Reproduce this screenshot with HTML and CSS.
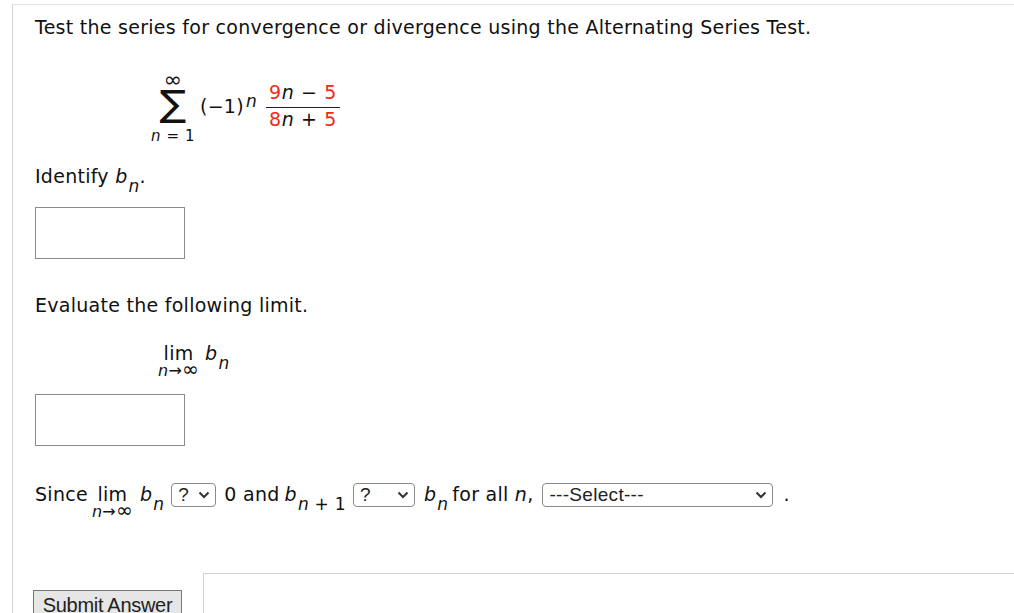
FILE: index.html
```html
<!DOCTYPE html>
<html lang="en">
<head>
    <meta charset="UTF-8">
    <title>Alternating Series Test</title>
    <link rel="stylesheet" href="styles.css">
</head>
<body>
    <div class="frame">
        <div class="question">
            <p class="prompt">Test the series for convergence or divergence using the Alternating Series Test.</p>

            <div class="series">
                <span class="sigma">
                    <span class="sigma-top">&infin;</span>
                    <span class="sigma-sign">&sum;</span>
                    <span class="sigma-bottom"><i>n</i> = 1</span>
                </span>
                <span class="sign">(&minus;1)<sup><i>n</i></sup></span>
                <span class="fraction">
                    <span class="num"><span class="red">9</span><i>n</i> &minus; <span class="red">5</span></span>
                    <span class="den"><span class="red">8</span><i>n</i> + <span class="red">5</span></span>
                </span>
            </div>

            <p class="step step-first">Identify <i>b</i><sub><i>n</i></sub>.</p>
            <input type="text" class="answer">

            <p class="step step-limit">Evaluate the following limit.</p>
            <div class="limit-block">
                <span class="lim">
                    <span class="lim-word">lim</span>
                    <span class="lim-under"><i>n</i>&rarr;<span class="inf">&infin;</span></span>
                </span>
                <span class="var"><i>b</i><sub><i>n</i></sub></span>
            </div>
            <input type="text" class="answer answer-limit">

            <div class="since">
                <span>Since</span>
                <span class="lim">
                    <span class="lim-word">lim</span>
                    <span class="lim-under"><i>n</i>&rarr;<span class="inf">&infin;</span></span>
                </span>
                <span class="var"><i>b</i><sub><i>n</i></sub></span>
                <span class="pick-wrap pick-small">
                    <select class="pick">
                        <option>?</option>
                        <option>=</option>
                        <option>&gt;</option>
                        <option>&lt;</option>
                    </select>
                    <svg class="chevron" width="12" height="8" viewBox="0 0 12 8"><path d="M1.5 1.5 L6 6 L10.5 1.5" fill="none" stroke="#333" stroke-width="2"/></svg>
                </span>
                <span class="word-and">0 and</span>
                <span class="var var-next"><i>b</i><sub><i>n</i> + 1</sub></span>
                <span class="pick-wrap pick-mid">
                    <select class="pick">
                        <option>?</option>
                        <option>&le;</option>
                        <option>&ge;</option>
                    </select>
                    <svg class="chevron" width="12" height="8" viewBox="0 0 12 8"><path d="M1.5 1.5 L6 6 L10.5 1.5" fill="none" stroke="#333" stroke-width="2"/></svg>
                </span>
                <span class="var var-after"><i>b</i><sub><i>n</i></sub></span>
                <span class="word-all">for all <i>n</i>,</span>
                <span class="pick-wrap pick-wide">
                    <select class="pick">
                        <option>---Select---</option>
                        <option>the series is convergent</option>
                        <option>the series is divergent</option>
                    </select>
                    <svg class="chevron" width="12" height="8" viewBox="0 0 12 8"><path d="M1.5 1.5 L6 6 L10.5 1.5" fill="none" stroke="#333" stroke-width="2"/></svg>
                </span>
                <span class="dot">.</span>
            </div>
        </div>

        <div class="footer">
            <button class="submit">Submit Answer</button>
            <div class="notes"></div>
        </div>
    </div>
</body>
</html>
```

FILE: styles.css
```css
body {
    margin: 0;
    padding: 0;
    background: white;
    font-family: "DejaVu Sans", Verdana, sans-serif;
    color: #111;
}
.frame {
    margin: 4px 0 0 12px;
    border-left: 1px solid #d6d6d6;
    border-top: 1px solid #e4e4e4;
    min-height: 640px;
}
.question {
    padding: 9px 0 0 22px;
    font-size: 19px;
    letter-spacing: 0.27px;
}
.prompt {
    margin: 0;
    line-height: 26px;
}
.red {
    color: #ee2a1b;
}
i {
    font-style: italic;
}
sub, sup {
    font-size: 17px;
    line-height: 0;
    position: relative;
    vertical-align: baseline;
}
sub {
    top: 9px;
    margin-left: 1px;
}
sup {
    top: -6px;
    margin-left: 2px;
}

/* series */
.series {
    display: flex;
    align-items: flex-start;
    margin: 33px 0 0 108px;
}
.sigma {
    display: flex;
    flex-direction: column;
    align-items: center;
    width: 60px;
}
.sigma-top {
    font-size: 22px;
    line-height: 14px;
}
.sigma-sign {
    font-size: 36px;
    line-height: 38px;
    margin-top: -2px;
    letter-spacing: 0;
    transform: scaleX(1.1);
}
.sigma-bottom {
    font-size: 15px;
    line-height: 18px;
    margin-top: 4px;
    letter-spacing: 0.6px;
}
.sign {
    line-height: 24px;
    margin: 21px 0 0 -3px;
}
.fraction {
    display: flex;
    flex-direction: column;
    align-items: center;
    margin: 8px 0 0 9px;
}
.num, .den {
    line-height: 23px;
    padding: 0 3px;
    letter-spacing: 0.6px;
}
.num {
    padding-bottom: 3px;
    border-bottom: 1px solid #222;
}

.step {
    margin: 0;
    line-height: 24px;
}
.step-first {
    margin-top: 19px;
}
.step-limit {
    margin-top: 34px;
}
.answer {
    display: block;
    box-sizing: border-box;
    width: 150px;
    height: 52px;
    margin-top: 19px;
    border: 1px solid #8a8a8a;
    font-size: 18px;
}

/* limits */
.limit-block {
    display: flex;
    align-items: flex-start;
    margin: 25px 0 0 123px;
}
.lim {
    display: inline-flex;
    flex-direction: column;
    align-items: center;
}
.lim-word {
    line-height: 22px;
}
.lim-under {
    font-size: 16px;
    line-height: 16px;
    margin-top: -1px;
}
.inf {
    font-size: 20px;
    line-height: 0;
}
.var {
    margin-left: 6px;
    line-height: 22px;
}
.answer-limit {
    margin-top: 15px;
}

.since {
    display: flex;
    align-items: flex-start;
    margin-top: 36px;
    line-height: 24px;
}
.since .lim {
    margin-left: 4px;
}
.since .lim-word {
    line-height: 24px;
}
.since .lim-under {
    margin-top: -2px;
}
.since .var {
    margin-left: 7px;
    line-height: 24px;
}
.since .var-next {
    margin-left: 5px;
}
.since .var-after {
    margin-left: 9px;
}
.word-and {
    margin-left: 8px;
}
.word-all {
    margin-left: 4px;
}
.pick-wrap {
    position: relative;
    display: inline-block;
    margin-left: 7px;
    height: 24px;
}
.pick {
    appearance: none;
    -webkit-appearance: none;
    box-sizing: border-box;
    width: 100%;
    height: 24px;
    font-family: "Liberation Sans", Arial, sans-serif;
    font-size: 19px;
    letter-spacing: 0.3px;
    padding: 0 0 0 6px;
    border: 1px solid #8a8a8a;
    border-radius: 4px;
    background: white;
    color: #222;
}
.chevron {
    position: absolute;
    right: 6px;
    top: 9px;
    pointer-events: none;
}
.pick-small {
    width: 45px;
}
.pick-mid {
    width: 62px;
}
.pick-wide {
    width: 231px;
    margin-left: 9px;
}
.dot {
    margin-left: 10px;
}

.footer {
    display: flex;
    align-items: flex-start;
    gap: 21px;
    margin: 53px 0 0 20px;
}
.submit {
    margin-top: 17px;
    width: 149px;
    height: 30px;
    font-family: "Liberation Sans", Arial, sans-serif;
    font-size: 20px;
    letter-spacing: -0.3px;
    color: #222;
    background: #e6e6e6;
    border: 1px solid #777;
    padding: 0 4px;
    border-radius: 0;
}
.notes {
    flex: 1;
    height: 80px;
    border-top: 1px solid #d0d0d0;
    border-left: 1px solid #d0d0d0;
}
```
